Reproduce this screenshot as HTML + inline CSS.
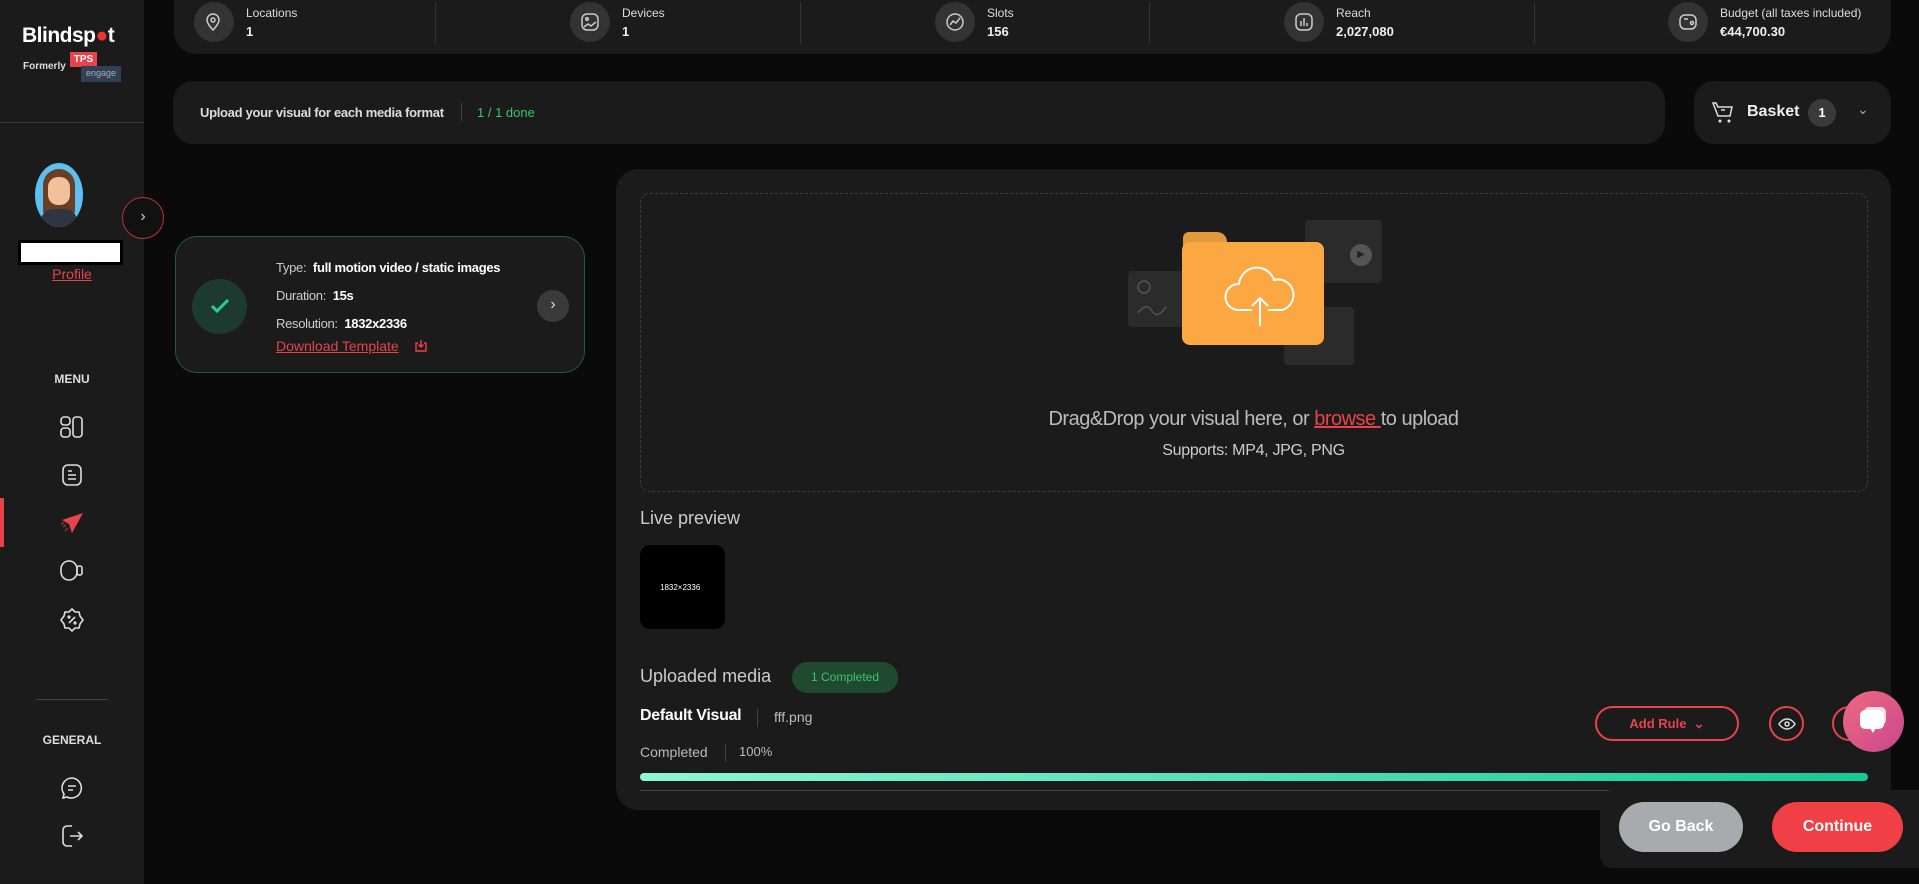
<!DOCTYPE html>
<html><head><meta charset="utf-8"><style>
*{box-sizing:border-box;margin:0;padding:0}
body{width:1919px;height:884px;background:#0a0a0a;font-family:"Liberation Sans",sans-serif;color:#e6e6e6;position:relative;overflow:hidden}
.abs{position:absolute}
.side{left:0;top:0;width:144px;height:884px;background:#1b1b1b}
.card{background:#1b1b1b}
.ic{position:absolute;width:40px;height:40px;border-radius:50%;background:#333;top:2px}
.lab{position:absolute;font-size:12px;color:#ddd;top:6px}
.val{position:absolute;font-size:13px;font-weight:bold;color:#eee;top:24px}
.div{position:absolute;top:2px;width:1px;height:42px;background:#333}
svg{position:absolute}
</style></head><body>
<div class="abs side">
  <div class="abs" style="left:22px;top:24px;font-size:21px;font-weight:bold;color:#fff;letter-spacing:-0.5px">Blindsp<span style="color:#e33">●</span>t</div>
  <div class="abs" style="left:23px;top:61px;font-size:10px;font-weight:bold;color:#ddd">Formerly</div>
  <div class="abs" style="left:70px;top:52px;width:27px;height:15px;background:#e8434a;color:#fff;font-size:10px;font-weight:bold;text-align:center;line-height:15px">TPS</div>
  <div class="abs" style="left:81px;top:66px;width:40px;height:16px;background:#324055;color:#aab;font-size:9px;text-align:center;line-height:15px">engage</div>
  <div class="abs" style="left:0;top:122px;width:144px;height:1px;background:#3a3a3a"></div>
  <div class="abs" style="left:35px;top:163px;width:48px;height:64px;border-radius:50%;background:#5cc0f0;overflow:hidden">
    <div class="abs" style="left:8px;top:6px;width:32px;height:46px;border-radius:16px 16px 4px 4px;background:#6b3e26"></div>
    <div class="abs" style="left:13px;top:14px;width:22px;height:28px;border-radius:10px;background:#f2c09a"></div>
    <div class="abs" style="left:6px;top:46px;width:36px;height:20px;border-radius:12px 12px 0 0;background:#2d3642"></div>
  </div>
  <div class="abs" style="left:122px;top:197px;width:42px;height:42px;border-radius:50%;border:1.5px solid #b33;background:#111;color:#ccc;text-align:center;line-height:38px;font-size:16px">›</div>
  <div class="abs" style="left:18px;top:240px;width:105px;height:25px;background:#000;padding:3px"><div style="background:#fff;width:100%;height:100%"></div></div>
  <div class="abs" style="left:0;width:144px;top:266px;text-align:center;font-size:14px;color:#e8434a;text-decoration:underline">Profile</div>
  <div class="abs" style="left:0;width:144px;top:372px;text-align:center;font-size:12px;font-weight:bold;color:#ddd">MENU</div>
  <svg style="left:60px;top:416px" width="24" height="22" viewBox="0 0 24 22" fill="none" stroke="#ddd" stroke-width="1.6"><rect x="1" y="1" width="9" height="8" rx="3"/><rect x="1" y="12" width="9" height="9" rx="3"/><rect x="13" y="1" width="9" height="20" rx="3"/></svg>
  <svg style="left:62px;top:464px" width="20" height="22" viewBox="0 0 20 22" fill="none" stroke="#ddd" stroke-width="1.6"><rect x="1" y="1" width="18" height="20" rx="5"/><path d="M6 7h4M6 11h8M6 15h8"/></svg>
  <div class="abs" style="left:0;top:498px;width:4px;height:49px;background:#e8434a"></div>
  <svg style="left:60px;top:512px" width="24" height="22" viewBox="0 0 24 22"><path d="M23 1L2 8l7 4 3 9z" fill="#e8434a"/><path d="M3 15l3-2M5 19l3-3M1 12l3-1" stroke="#7a2a2a" stroke-width="2"/></svg>
  <svg style="left:60px;top:560px" width="24" height="22" viewBox="0 0 24 22" fill="none" stroke="#ddd" stroke-width="1.6"><rect x="1" y="1" width="16" height="19" rx="8"/><rect x="17" y="6" width="5" height="9" rx="2"/></svg>
  <svg style="left:60px;top:608px" width="24" height="24" viewBox="0 0 24 24" fill="none" stroke="#ddd" stroke-width="1.6"><path d="M12 1l3 3 4 0 1 4 3 4-3 4-1 4-4 0-3 3-3-3-4 0-1-4-3-4 3-4 1-4 4 0z"/><path d="M9 15l6-6"/><circle cx="9" cy="9" r=".8"/><circle cx="15" cy="15" r=".8"/></svg>
  <div class="abs" style="left:36px;top:699px;width:72px;height:1px;background:#444"></div>
  <div class="abs" style="left:0;width:144px;top:733px;text-align:center;font-size:12px;font-weight:bold;color:#ddd">GENERAL</div>
  <svg style="left:60px;top:776px" width="24" height="24" viewBox="0 0 24 24" fill="none" stroke="#ddd" stroke-width="1.6"><path d="M12 2a10 10 0 1 1-5 19l-4 1 1-4A10 10 0 0 1 12 2z"/><path d="M8 10h8M8 14h5"/></svg>
  <svg style="left:60px;top:824px" width="24" height="24" viewBox="0 0 24 24" fill="none" stroke="#ddd" stroke-width="1.6"><path d="M12 2H7a4 4 0 0 0-4 4v12a4 4 0 0 0 4 4h5"/><path d="M10 12h12M18 8l4 4-4 4"/></svg>
</div>

<div class="abs card" style="left:174px;top:-20px;width:1717px;height:74px;border-radius:0 0 22px 22px">
  <div style="position:absolute;left:0;top:20px;width:100%;height:50px">
    <div class="ic" style="left:20px"></div><div class="lab" style="left:72px">Locations</div><div class="val" style="left:72px">1</div>
    <div class="div" style="left:261px"></div>
    <div class="ic" style="left:396px"></div><div class="lab" style="left:448px">Devices</div><div class="val" style="left:448px">1</div>
    <div class="div" style="left:626px"></div>
    <div class="ic" style="left:761px"></div><div class="lab" style="left:813px">Slots</div><div class="val" style="left:813px">156</div>
    <div class="div" style="left:975px"></div>
    <div class="ic" style="left:1110px"></div><div class="lab" style="left:1162px">Reach</div><div class="val" style="left:1162px">2,027,080</div>
    <div class="div" style="left:1360px"></div>
    <div class="ic" style="left:1494px"></div><div class="lab" style="left:1546px">Budget (all taxes included)</div><div class="val" style="left:1546px">€44,700.30</div>
  </div>
</div>
<svg style="left:203px;top:12px" width="20" height="20" viewBox="0 0 20 20" fill="none" stroke="#ccc" stroke-width="1.5"><path d="M10 18s6-6 6-10a6 6 0 0 0-12 0c0 4 6 10 6 10z"/><circle cx="10" cy="8" r="2"/></svg>
<svg style="left:580px;top:12px" width="20" height="20" viewBox="0 0 20 20" fill="none" stroke="#ccc" stroke-width="1.5"><rect x="2" y="2" width="16" height="16" rx="5"/><circle cx="7" cy="7" r="1.3"/><path d="M4 15l4-3 3 2 5-4"/></svg>
<svg style="left:945px;top:12px" width="20" height="20" viewBox="0 0 20 20" fill="none" stroke="#ccc" stroke-width="1.5"><circle cx="10" cy="10" r="8"/><path d="M5 13l3-4 3 2 4-5"/></svg>
<svg style="left:1294px;top:12px" width="20" height="20" viewBox="0 0 20 20" fill="none" stroke="#ccc" stroke-width="1.5"><rect x="2" y="2" width="16" height="16" rx="5"/><path d="M7 14V9M10 14V6M13 14v-3"/></svg>
<svg style="left:1678px;top:12px" width="20" height="20" viewBox="0 0 20 20" fill="none" stroke="#ccc" stroke-width="1.5"><rect x="2" y="3" width="16" height="14" rx="5"/><path d="M6 7h4"/><circle cx="14" cy="11" r="1.5"/></svg>

<div class="abs card" style="left:173px;top:81px;width:1492px;height:63px;border-radius:20px">
  <div class="abs" style="left:27px;top:24px;font-size:13px;font-weight:bold;color:#ddd;letter-spacing:-0.3px">Upload your visual for each media format</div>
  <div class="abs" style="left:288px;top:22px;width:1px;height:18px;background:#444"></div>
  <div class="abs" style="left:304px;top:24px;font-size:13px;color:#3cc56a">1 / 1 done</div>
</div>
<div class="abs card" style="left:1694px;top:81px;width:197px;height:63px;border-radius:20px">
  <svg style="left:18px;top:20px" width="22" height="22" viewBox="0 0 22 22" fill="none" stroke="#ddd" stroke-width="1.5"><path d="M1 2h3l2 4h14l-2 9H6z"/><path d="M9 9h4"/><circle cx="8" cy="20" r=".8"/><circle cx="17" cy="20" r=".8"/></svg>
  <div class="abs" style="left:53px;top:22px;font-size:16px;font-weight:bold;color:#eee">Basket</div>
  <div class="abs" style="left:114px;top:18px;width:28px;height:28px;border-radius:50%;background:#3a3a3a;color:#fff;font-size:13px;font-weight:bold;text-align:center;line-height:28px">1</div>
  <div class="abs" style="left:163px;top:20px;color:#aaa;font-size:14px">⌄</div>
</div>

<div class="abs" style="left:175px;top:236px;width:410px;height:137px;border-radius:22px;border:1.5px solid #1e5a40;background:#1b1b1b">
  <div class="abs" style="left:16px;top:42px;width:55px;height:55px;border-radius:50%;background:#1d3a31"></div>
  <svg style="left:34px;top:60px" width="20" height="18" viewBox="0 0 20 18"><path d="M2 9l5 5L18 3" fill="none" stroke="#2ecc8b" stroke-width="3"/></svg>
  <div class="abs" style="left:100px;top:23px;font-size:13px;color:#ccc;letter-spacing:-0.3px">Type: &nbsp;<b style="color:#fff">full motion video / static images</b></div>
  <div class="abs" style="left:100px;top:51px;font-size:13px;color:#ccc;letter-spacing:-0.3px">Duration: &nbsp;<b style="color:#fff">15s</b></div>
  <div class="abs" style="left:100px;top:79px;font-size:13px;color:#ccc;letter-spacing:-0.3px">Resolution: &nbsp;<b style="color:#fff">1832x2336</b></div>
  <div class="abs" style="left:100px;top:101px;font-size:14px;color:#e8434a;text-decoration:underline">Download Template</div>
  <svg style="left:238px;top:102px" width="14" height="14" viewBox="0 0 14 14" fill="none" stroke="#e8434a" stroke-width="1.4"><path d="M4 4H2v8h10V4h-2M7 1v7M4.5 5.5L7 8l2.5-2.5"/></svg>
  <div class="abs" style="left:361px;top:53px;width:32px;height:32px;border-radius:50%;background:#3a3a3a;color:#ddd;text-align:center;line-height:30px;font-size:16px">›</div>
</div>

<div class="abs card" style="left:616px;top:169px;width:1275px;height:641px;border-radius:22px">
  <div class="abs" style="left:24px;top:24px;width:1228px;height:299px;border:1px dashed #3c3c3c;border-radius:10px"></div>
  <div class="abs" style="left:512px;top:102px;width:62px;height:56px;background:#2b2b2b;border-radius:4px"></div>
  <div class="abs" style="left:689px;top:51px;width:77px;height:63px;background:#2b2b2b;border-radius:4px"></div>
  <div class="abs" style="left:668px;top:138px;width:70px;height:58px;background:#2b2b2b;border-radius:4px"></div>
  <div class="abs" style="left:734px;top:75px;width:22px;height:22px;border-radius:50%;background:#555;color:#222;font-size:10px;text-align:center;line-height:22px">▶</div>
  <svg style="left:520px;top:110px" width="50" height="40" viewBox="0 0 50 40" fill="none" stroke="#555" stroke-width="1.5"><circle cx="8" cy="8" r="6"/><path d="M2 34c6-8 10-8 14-2s8 4 14-4"/></svg>
  <div class="abs" style="left:567px;top:63px;width:44px;height:20px;background:#e09a3c;border-radius:6px 10px 0 0"></div>
  <div class="abs" style="left:566px;top:73px;width:142px;height:103px;background:#fba742;border-radius:8px"></div>
  <svg style="left:606px;top:97px" width="78" height="62" viewBox="0 0 78 62" fill="none" stroke="#fff" stroke-width="2"><path d="M30 44H16a13 13 0 0 1 1-26A18 18 0 0 1 52 14a14 14 0 0 1 8 30H46"/><path d="M38 60V32M30 40l8-8 8 8"/></svg>
  <div class="abs" style="left:0;width:1275px;top:239px;text-align:center;font-size:20px;color:#bbb;letter-spacing:-0.5px">Drag&amp;Drop your visual here, or <span style="color:#e8434a;text-decoration:underline">browse </span>to upload</div>
  <div class="abs" style="left:0;width:1275px;top:273px;text-align:center;font-size:16px;color:#ccc;letter-spacing:-0.3px">Supports: MP4, JPG, PNG</div>
  <div class="abs" style="left:24px;top:339px;font-size:18px;color:#ccc">Live preview</div>
  <div class="abs" style="left:24px;top:376px;width:85px;height:84px;background:#000;border-radius:10px"><div style="position:absolute;left:20px;top:38px;font-size:8px;color:#fff">1832×2336</div></div>
  <div class="abs" style="left:24px;top:497px;font-size:18px;color:#ccc">Uploaded media</div>
  <div class="abs" style="left:176px;top:493px;width:106px;height:31px;border-radius:16px;background:#1f4a2f;color:#3cc56a;font-size:12px;text-align:center;line-height:31px">1 Completed</div>
  <div class="abs" style="left:24px;top:538px;font-size:16px;font-weight:bold;color:#fff;letter-spacing:-0.3px">Default Visual</div>
  <div class="abs" style="left:141px;top:540px;width:1px;height:18px;background:#444"></div>
  <div class="abs" style="left:158px;top:540px;font-size:14px;color:#bbb">fff.png</div>
  <div class="abs" style="left:24px;top:575px;font-size:14px;color:#bbb">Completed</div>
  <div class="abs" style="left:109px;top:575px;width:1px;height:18px;background:#444"></div>
  <div class="abs" style="left:123px;top:575px;font-size:13px;color:#bbb">100%</div>
  <div class="abs" style="left:24px;top:604px;width:1228px;height:8px;border-radius:4px;background:linear-gradient(90deg,#8ff5d6,#15c995)"></div>
  <div class="abs" style="left:24px;top:621px;width:1228px;height:1px;background:#444"></div>
  <div class="abs" style="left:979px;top:537px;width:144px;height:35px;border:2px solid #e8434a;border-radius:18px;color:#e8434a;font-size:13px;font-weight:bold;text-align:center;line-height:31px">Add Rule &nbsp;⌄</div>
  <div class="abs" style="left:1153px;top:537px;width:35px;height:35px;border:2px solid #e8434a;border-radius:50%"></div>
  <svg style="left:1162px;top:549px" width="18" height="12" viewBox="0 0 18 12" fill="none" stroke="#ddd" stroke-width="1.5"><path d="M1 6s3-5 8-5 8 5 8 5-3 5-8 5-8-5-8-5z"/><circle cx="9" cy="6" r="2"/></svg>
  <div class="abs" style="left:1216px;top:537px;width:35px;height:35px;border:2px solid #e8434a;border-radius:50%"></div>
</div>

<div class="abs" style="left:1893px;top:0;width:26px;height:884px;background:#0a0a0a"></div>
<div class="abs" style="left:1600px;top:790px;width:319px;height:78px;background:#1b1b1b;border-radius:12px 0 0 12px"></div>
<div class="abs" style="left:1619px;top:802px;width:124px;height:50px;border-radius:25px;background:#a8aaad;color:#fff;font-size:16px;font-weight:bold;text-align:center;line-height:50px">Go Back</div>
<div class="abs" style="left:1772px;top:802px;width:131px;height:50px;border-radius:25px;background:#f04045;color:#fff;font-size:16px;font-weight:bold;text-align:center;line-height:50px">Continue</div>
<div class="abs" style="left:1843px;top:691px;width:61px;height:61px;border-radius:50%;background:linear-gradient(135deg,#f06a7e,#c8478f)"></div>
<svg style="left:1858px;top:706px" width="32" height="30" viewBox="0 0 32 30"><rect x="6" y="1" width="22" height="18" rx="5" fill="#fff" opacity=".8"/><rect x="2" y="4" width="24" height="19" rx="5" fill="#fff"/><path d="M12 22l3 5 3-5z" fill="#fff"/></svg>
</body></html>
